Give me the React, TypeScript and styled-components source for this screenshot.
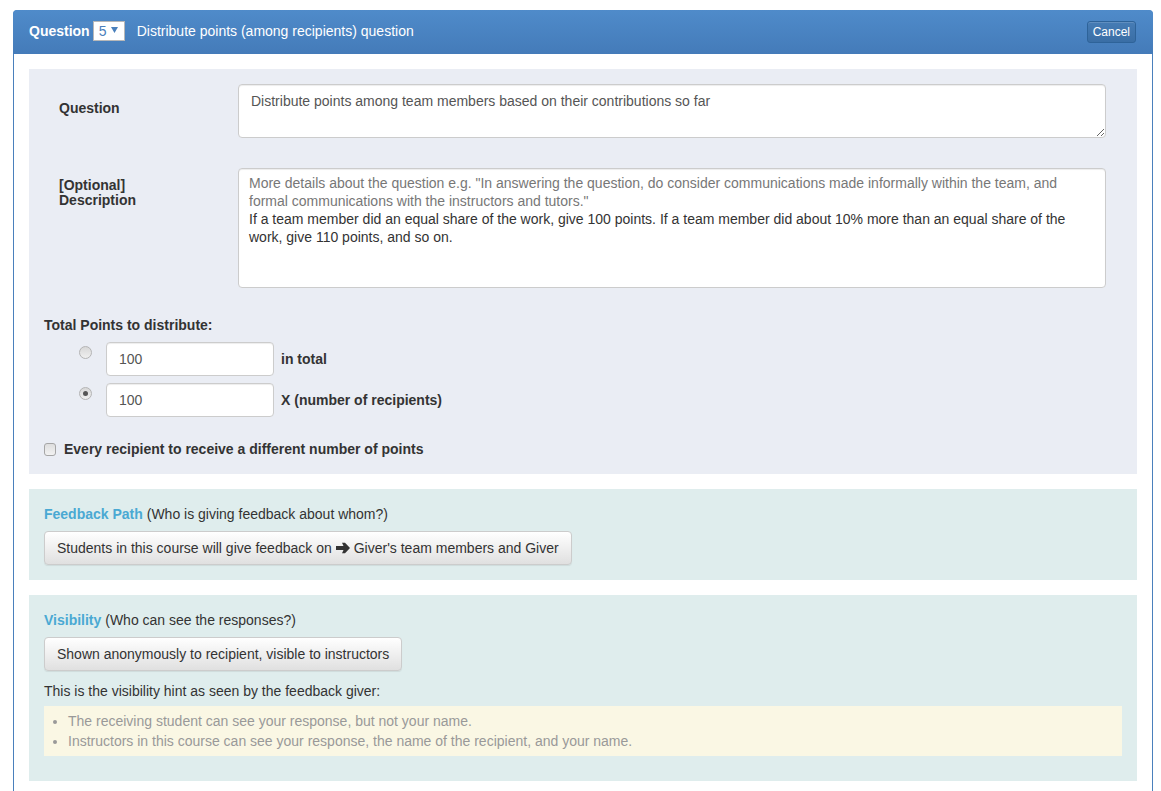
import styled, { createGlobalStyle } from "styled-components";

const GlobalStyle = createGlobalStyle`
  html, body {
    margin: 0;
    height: 100%;
    overflow: hidden;
    background: #fff;
  }
  body {
    font-family: "Liberation Sans", Arial, sans-serif;
    font-size: 14px;
    line-height: 20px;
    color: #333;
  }
  * {
    box-sizing: border-box;
  }
`;

const Page = styled.div`
  height: 791px;
  overflow: hidden;
  padding: 10px 8px 0 13px;
`;

const Panel = styled.div`
  border: 1px solid #4a80bc;
  border-radius: 4px;
  background: #fff;
  padding-bottom: 40px;
`;

const PanelHeader = styled.div`
  display: flex;
  align-items: center;
  height: 44px;
  margin: -1px -1px 0;
  padding: 0 17px 2px 16px;
  border-radius: 4px 4px 0 0;
  color: #fff;
  background: linear-gradient(to bottom, #4f8bca 0%, #447bb9 100%);
`;

const HeaderTitle = styled.strong`
  margin-right: 3px;
`;

const NumberSelect = styled.div`
  display: flex;
  align-items: center;
  justify-content: space-between;
  width: 32px;
  height: 20px;
  padding: 0 6px 0 5px;
  margin-right: 12px;
  background: #fff;
  border: 1px solid #b8b8b8;
  color: #4a80bc;
`;

const SelectArrow = styled.svg`
  width: 7px;
  height: 6px;
  margin-top: -2px;
  fill: #4a80bc;
`;

const HeaderText = styled.span`
  flex: 1;
`;

const CancelButton = styled.button`
  height: 22px;
  margin-top: 2px;
  padding: 0 5px;
  font: inherit;
  font-size: 12px;
  line-height: 18px;
  color: #fff;
  border: 1px solid #2e6399;
  border-radius: 3px;
  background: linear-gradient(to bottom, #467cb5 0%, #3a6ea5 100%);
  box-shadow: inset 0 1px 0 rgba(255, 255, 255, 0.15);
`;

const PanelBody = styled.div`
  display: flex;
  flex-direction: column;
  gap: 15px;
  padding: 15px 15px 0;
`;

const Section = styled.section<{ $tone: "blue" | "green"; $height: number }>`
  height: ${(p) => p.$height}px;
  padding: 15px;
  background: ${(p) => (p.$tone === "blue" ? "#eaedf4" : "#dfeded")};
`;

const FieldRow = styled.div<{ $height: number }>`
  display: grid;
  grid-template-columns: 194px 868px;
  height: ${(p) => p.$height}px;
  margin-bottom: 30px;
`;

const FieldLabel = styled.label<{ $top: number }>`
  padding: ${(p) => p.$top}px 0 0 15px;
  font-weight: 700;
  line-height: 15px;
`;

const QuestionArea = styled.textarea`
  display: block;
  width: 100%;
  height: 100%;
  padding: 6px 12px;
  font: inherit;
  color: #555;
  background: #fff;
  border: 1px solid #ccc;
  border-radius: 4px;
  box-shadow: inset 0 1px 1px rgba(0, 0, 0, 0.075);
  resize: vertical;
  outline: none;
`;

const DescriptionBox = styled.div`
  padding: 5px 10px;
  font-size: 14px;
  line-height: 18px;
  color: #333;
  background: #fff;
  border: 1px solid #ccc;
  border-radius: 4px;
  box-shadow: inset 0 1px 1px rgba(0, 0, 0, 0.075);
`;

const MutedLine = styled.div`
  color: #777;
`;

const PointsTitle = styled.div`
  font-weight: 700;
  line-height: 14px;
  margin: 0 0 10px;
`;

const PointsRow = styled.div`
  display: flex;
  align-items: flex-start;
  gap: 7px;
  height: 34px;
  margin: 0 0 7px 35px;
`;

const RadioDot = styled.span<{ $checked?: boolean }>`
  display: flex;
  align-items: center;
  justify-content: center;
  width: 13px;
  height: 13px;
  margin: 4px 7px 0 0;
  border: 1px solid #b4b4b4;
  border-radius: 50%;
  background: linear-gradient(to bottom, #d8d8d8, #efefef);

  &::after {
    content: "";
    display: ${(p) => (p.$checked ? "block" : "none")};
    width: 5px;
    height: 5px;
    border-radius: 50%;
    background: #555;
  }
`;

const PointsInput = styled.input`
  width: 168px;
  height: 34px;
  padding: 6px 12px;
  font: inherit;
  color: #555;
  background: #fff;
  border: 1px solid #ccc;
  border-radius: 4px;
  box-shadow: inset 0 1px 1px rgba(0, 0, 0, 0.075);
  outline: none;
`;

const PointsUnit = styled.strong`
  line-height: 34px;
`;

const CheckRow = styled.div`
  display: flex;
  align-items: center;
  gap: 8px;
  margin-top: 22px;
  font-weight: 700;
`;

const CheckBox = styled.span`
  width: 12px;
  height: 13px;
  border: 1px solid #a6a6a6;
  border-radius: 3px;
  background: linear-gradient(to bottom, #dedede, #f2f2f2);
`;

const SectionTitle = styled.div`
  margin-bottom: 7px;
`;

const AccentName = styled.strong`
  color: #4aa9d3;
`;

const DropdownButton = styled.button`
  display: inline-flex;
  align-items: center;
  height: 34px;
  padding: 0 12px;
  font: inherit;
  color: #333;
  border: 1px solid #ccc;
  border-radius: 4px;
  background: linear-gradient(to bottom, #fff 0%, #e0e0e0 100%);
  box-shadow: 0 1px 1px rgba(0, 0, 0, 0.075);
`;

const ArrowIcon = styled.svg`
  width: 14px;
  height: 12px;
  margin: 0 4px;
  fill: #333;
`;

const HintLead = styled.div`
  margin-top: 10px;
`;

const HintList = styled.ul`
  margin: 5px 0 0;
  padding: 5px 0 5px 24px;
  list-style: disc;
  background: #faf7e4;
  color: #999;
`;

export default function App() {
  return (
    <>
      <GlobalStyle />
      <Page>
        <Panel>
          <PanelHeader>
            <HeaderTitle>Question</HeaderTitle>
            <NumberSelect>
              5
              <SelectArrow viewBox="0 0 7 6">
                <path d="M0 0h7L3.5 6z" />
              </SelectArrow>
            </NumberSelect>
            <HeaderText>Distribute points (among recipients) question</HeaderText>
            <CancelButton>Cancel</CancelButton>
          </PanelHeader>
          <PanelBody>
            <Section $tone="blue" $height={405}>
              <FieldRow $height={54}>
                <FieldLabel $top={17}>Question</FieldLabel>
                <QuestionArea defaultValue="Distribute points among team members based on their contributions so far" />
              </FieldRow>
              <FieldRow $height={120}>
                <FieldLabel $top={10}>
                  [Optional]
                  <br />
                  Description
                </FieldLabel>
                <DescriptionBox>
                  <MutedLine>
                    More details about the question e.g. "In answering the question, do consider communications made informally within the team, and formal communications with the instructors and tutors."
                  </MutedLine>
                  If a team member did an equal share of the work, give 100 points. If a team member did about 10% more than an equal share of the work, give 110 points, and so on.
                </DescriptionBox>
              </FieldRow>
              <PointsTitle>Total Points to distribute:</PointsTitle>
              <PointsRow>
                <RadioDot />
                <PointsInput defaultValue="100" />
                <PointsUnit>in total</PointsUnit>
              </PointsRow>
              <PointsRow>
                <RadioDot $checked />
                <PointsInput defaultValue="100" />
                <PointsUnit>X (number of recipients)</PointsUnit>
              </PointsRow>
              <CheckRow>
                <CheckBox />
                Every recipient to receive a different number of points
              </CheckRow>
            </Section>
            <Section $tone="green" $height={91}>
              <SectionTitle>
                <AccentName>Feedback Path</AccentName> (Who is giving feedback about whom?)
              </SectionTitle>
              <DropdownButton>
                Students in this course will give feedback on
                <ArrowIcon viewBox="0 0 14 12">
                  <path d="M0 4h7.500L6 .8h3L14 6l-5 5.200H6L7.500 8H0z" />
                </ArrowIcon>
                Giver's team members and Giver
              </DropdownButton>
            </Section>
            <Section $tone="green" $height={186}>
              <SectionTitle>
                <AccentName>Visibility</AccentName> (Who can see the responses?)
              </SectionTitle>
              <DropdownButton>Shown anonymously to recipient, visible to instructors</DropdownButton>
              <HintLead>This is the visibility hint as seen by the feedback giver:</HintLead>
              <HintList>
                <li>The receiving student can see your response, but not your name.</li>
                <li>Instructors in this course can see your response, the name of the recipient, and your name.</li>
              </HintList>
            </Section>
          </PanelBody>
        </Panel>
      </Page>
    </>
  );
}
